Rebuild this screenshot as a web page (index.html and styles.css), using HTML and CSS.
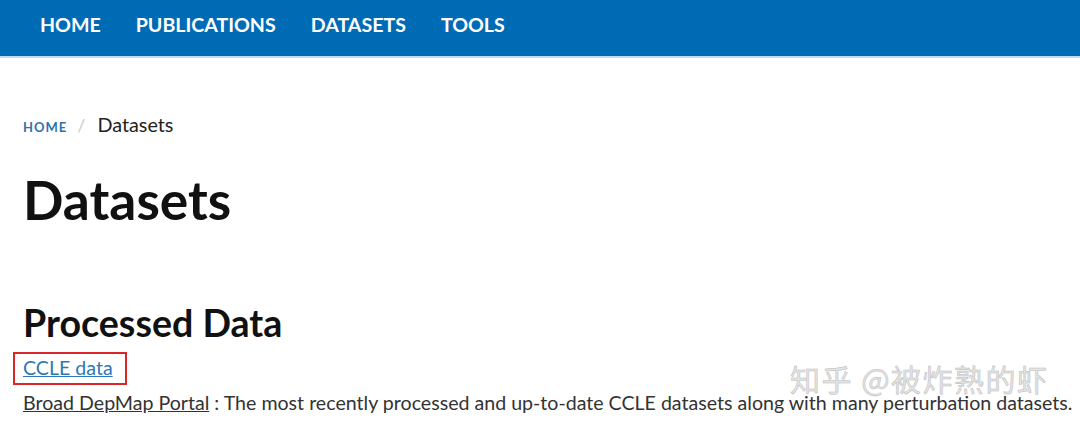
FILE: index.html
```html
<!DOCTYPE html>
<html>
<head>
<meta charset="utf-8">
<link rel="stylesheet" href="styles.css">
</head>
<body>
<nav class="topnav">
  <a class="nav-item" href="#">HOME</a>
  <a class="nav-item" href="#">PUBLICATIONS</a>
  <a class="nav-item" href="#">DATASETS</a>
  <a class="nav-item" href="#">TOOLS</a>
</nav>
<main class="content">
  <div class="breadcrumb">
    <a class="crumb-home" href="#">HOME</a>
    <span class="crumb-sep">/</span>
    <span class="crumb-current">Datasets</span>
  </div>
  <h1 class="page-title">Datasets</h1>
  <h2 class="section-title">Processed Data</h2>
  <div class="boxed"><a class="link" href="#">CCLE data</a></div>
  <p class="desc"><a class="plain-link" href="#">Broad DepMap Portal</a> : The most recently processed and up-to-date CCLE datasets along with many perturbation datasets.</p>
</main>
<div class="watermark">知乎 @被炸熟的虾</div>
</body>
</html>
```
FILE: styles.css
```css
html, body {
  margin: 0;
  padding: 0;
  background: #fff;
  width: 1080px;
  height: 425px;
  overflow: hidden;
  font-family: Lato, "Liberation Sans", sans-serif;
  position: relative;
}
.topnav {
  height: 58px;
  background: #006bb5;
  border-bottom: 2px solid #b9dcf3;
  display: flex;
  align-items: center;
  gap: 35px;
  padding-left: 40px;
  box-sizing: border-box;
}
.nav-item {
  color: #fff;
  text-decoration: none;
  font-weight: 700;
  font-size: 19.6px;
  padding-bottom: 8px;
}
.content {
  padding-left: 23px;
}
.breadcrumb {
  margin-top: 54px;
  display: flex;
  align-items: baseline;
  height: 24px;
}
.crumb-home {
  color: #2e72ae;
  font-weight: 700;
  font-size: 13px;
  letter-spacing: 1px;
  text-decoration: none;
}
.crumb-sep {
  color: #ccc;
  font-size: 18px;
  margin: 0 12px 0 10px;
}
.crumb-current {
  color: #222;
  font-size: 19.8px;
}
.page-title {
  font-size: 53.3px;
  font-weight: 700;
  color: #111;
  margin: 33px 0 0 0;
  line-height: 60px;
}
.section-title {
  font-size: 37.6px;
  font-weight: 700;
  color: #111;
  margin: 73px 0 0 0;
  line-height: 42px;
}
.boxed {
  display: inline-block;
  border: 2px solid #d9262b;
  margin: 8px 0 0 -10px;
  padding: 2px 12px 4px 8px;
}
.link {
  color: #2f77b8;
  font-size: 19.6px;
}
.desc {
  margin: 6px 0 0 0;
  font-size: 19.6px;
  color: #333;
}
.plain-link {
  color: #333;
}
.watermark {
  position: absolute;
  left: 790px;
  top: 356px;
  font-family: "Noto Sans CJK SC", sans-serif;
  font-size: 30px;
  color: #e4e4e4;
  -webkit-text-stroke: 0.5px #bbb;
  letter-spacing: 1.5px;
}
```
